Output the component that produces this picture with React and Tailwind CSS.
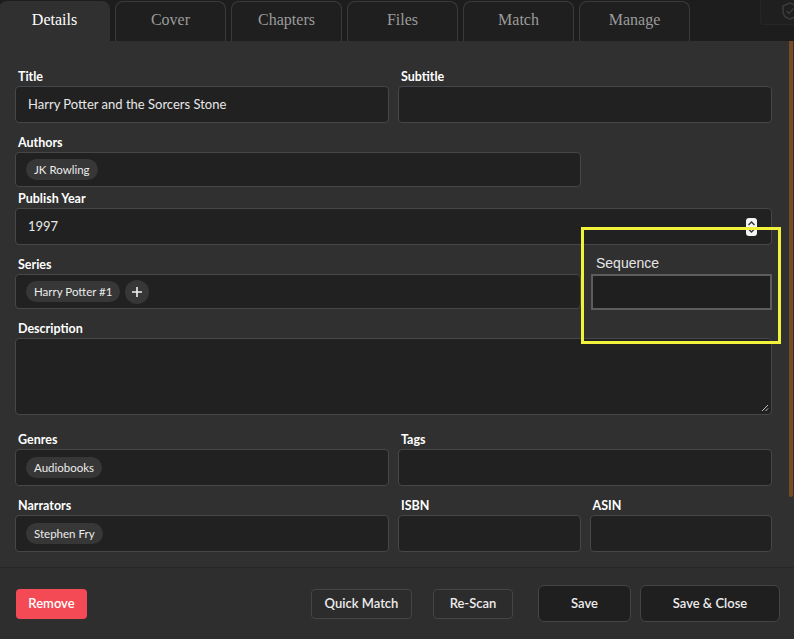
const font = { fontFamily: "Lato, 'Open Sans', sans-serif" };

const Label = ({ children }) => (
  <div className="h-[18px] pl-[3px] text-[12.5px] font-bold leading-[18px] text-white">{children}</div>
);

const Box = ({ h = "h-[37px]", children, className = "" }) => (
  <div
    className={`${h} flex items-center gap-[5px] rounded-[4px] border border-[#45474b] bg-[#212121] px-[10px] ${className}`}
  >
    {children}
  </div>
);

const Chip = ({ children }) => (
  <span className="flex h-[21px] items-center rounded-full bg-[#373737] px-[8px] text-[11.5px] text-[#ececec]">
    {children}
  </span>
);

const Field = ({ label, span = "col-span-2", h, children, className = "" }) => (
  <div className={`${span} ${className}`}>
    <Label>{label}</Label>
    <Box h={h}>{children}</Box>
  </div>
);

const tabs = ["Details", "Cover", "Chapters", "Files", "Match", "Manage"];

export default function App() {
  return (
    <div className="flex h-[639px] w-[794px] flex-col overflow-hidden bg-[#1d1d1d]" style={font}>
      {/* Tabs */}
      <div className="relative flex h-[41px] shrink-0 items-end gap-[5px] bg-[#1d1d1d] pl-0">
        {tabs.map((t, i) => (
          <div
            key={t}
            className={`flex h-[40px] w-[111px] items-center justify-center rounded-t-[8px] border border-b-0 pb-[3px] text-[16px] ${
              i === 0
                ? "-ml-[1px] border-[#303030] bg-[#303030] text-white"
                : "border-[#3a3a3a] bg-[#1f1f1f] text-[#9b9b9b]"
            }`}
            style={{ fontFamily: "'Liberation Serif', serif" }}
          >
            {t}
          </div>
        ))}
        <div className="absolute right-0 top-0 flex h-[25px] w-[34px] items-start justify-end rounded-bl-[4px] border-b border-l border-[#262626] bg-[#1f1f1f]">
          <svg width="16" height="18" viewBox="0 0 16 18" className="mr-[-4px] mt-[2px]">
            <path d="M8 1 L15 4 V9 C15 13 12 16 8 17 C4 16 1 13 1 9 V4 Z" fill="none" stroke="#3c3c3c" strokeWidth="1.5" />
            <path d="M4.5 9 L7 11.5 L11.5 6.5" fill="none" stroke="#3c3c3c" strokeWidth="1.5" />
          </svg>
        </div>
      </div>

      {/* Panel */}
      <div className="relative flex h-[526px] shrink-0 bg-[#303030]">
        <div className="flex-1 pl-[15px] pr-[17px] pt-[27px]">
          <div className="grid grid-cols-4 gap-x-[9px]">
            <Field label="Title">
              <span className="pl-[2px] text-[13px] text-[#e8e8e8]">Harry Potter and the Sorcers Stone</span>
            </Field>
            <Field label="Subtitle" />

            <Field label="Authors" span="col-span-3" h="h-[35px]" className="mt-[11px]">
              <Chip>JK Rowling</Chip>
            </Field>
            <div className="col-span-1" />

            <Field label="Publish Year" span="col-span-4" className="mt-[3px]">
              <span className="flex-1 pl-[2px] text-[13px] text-[#e8e8e8]">1997</span>
              <svg width="11" height="18" viewBox="0 0 11 18" className="mr-[4px]">
                <rect x="0" y="0" width="11" height="18" rx="3" fill="#f4f4f4" />
                <path d="M2.5 7 L5.5 4 L8.5 7" fill="none" stroke="#333" strokeWidth="1.4" />
                <path d="M2.5 11 L5.5 14 L8.5 11" fill="none" stroke="#333" strokeWidth="1.4" />
              </svg>
            </Field>

            <Field label="Series" span="col-span-3" h="h-[35px]" className="mt-[11px]">
              <Chip>Harry Potter #1</Chip>
              <span className="flex h-[24px] w-[24px] items-center justify-center rounded-full bg-[#373737]">
                <svg width="12" height="12" viewBox="0 0 12 12">
                  <path d="M6 1 V11 M1 6 H11" stroke="#f0f0f0" strokeWidth="1.6" />
                </svg>
              </span>
            </Field>
            <div className="col-span-1" />

            <div className="col-span-4 mt-[11px]">
              <Label>Description</Label>
              <Box h="h-[77px]" className="relative">
                <svg width="8" height="8" viewBox="0 0 8 8" className="absolute bottom-[2px] right-[2px]">
                  <path d="M7 1 L1 7 M7 4.5 L4.5 7" stroke="#bdbdbd" strokeWidth="1" />
                </svg>
              </Box>
            </div>

            <Field label="Genres" className="mt-[16px]">
              <Chip>Audiobooks</Chip>
            </Field>
            <Field label="Tags" className="mt-[16px]" />

            <Field label="Narrators" className="mt-[11px]">
              <Chip>Stephen Fry</Chip>
            </Field>
            <Field label="ISBN" span="col-span-1" className="mt-[11px]" />
            <Field label="ASIN" span="col-span-1" className="mt-[11px]" />
          </div>
        </div>
        <div className="w-[5px] shrink-0 pt-0">
          <div className="h-[456px] w-[4px] rounded-b-[3px] bg-[#774a22]" />
        </div>

        {/* Sequence popup overlay */}
        <div className="absolute left-[581px] top-[186px] h-[117px] w-[200px] border-[3px] border-[#f2f23a]">
          <div
            className="ml-[12px] mt-[24px] text-[14px] leading-[18px] text-[#e6e6e6]"
            style={{ fontFamily: "'Liberation Sans', Arial, sans-serif" }}
          >
            Sequence
          </div>
          <div className="ml-[7px] mt-[2px] h-[36px] w-[181px] border-2 border-[#5c5c5c] bg-[#1f1f1f]" />
        </div>
      </div>

      {/* Footer */}
      <div className="h-[72px] shrink-0 border-t border-[#272727] bg-[#2e2e2e]">
        <div className="flex h-full items-center pl-[16px] pr-[14px]">
          <button className="h-[30px] w-[71px] rounded-[4px] bg-[#f34a55] text-[13px] font-semibold text-white">
            Remove
          </button>
          <div className="flex-1" />
          <button className="h-[30px] w-[101px] rounded-[4px] border border-[#454545] bg-[#2c2c2c] text-[13px] font-semibold text-[#ececec]">
            Quick Match
          </button>
          <button className="ml-[21px] h-[30px] w-[80px] rounded-[4px] border border-[#454545] bg-[#2c2c2c] text-[13px] font-semibold text-[#ececec]">
            Re-Scan
          </button>
          <button className="ml-[25px] h-[37px] w-[93px] rounded-[6px] border border-[#454545] bg-[#1f1f1f] text-[13px] font-semibold text-[#ececec]">
            Save
          </button>
          <button className="ml-[9px] h-[37px] w-[140px] rounded-[6px] border border-[#454545] bg-[#1f1f1f] text-[13px] font-semibold text-[#ececec]">
            Save &amp; Close
          </button>
        </div>
      </div>
    </div>
  );
}
